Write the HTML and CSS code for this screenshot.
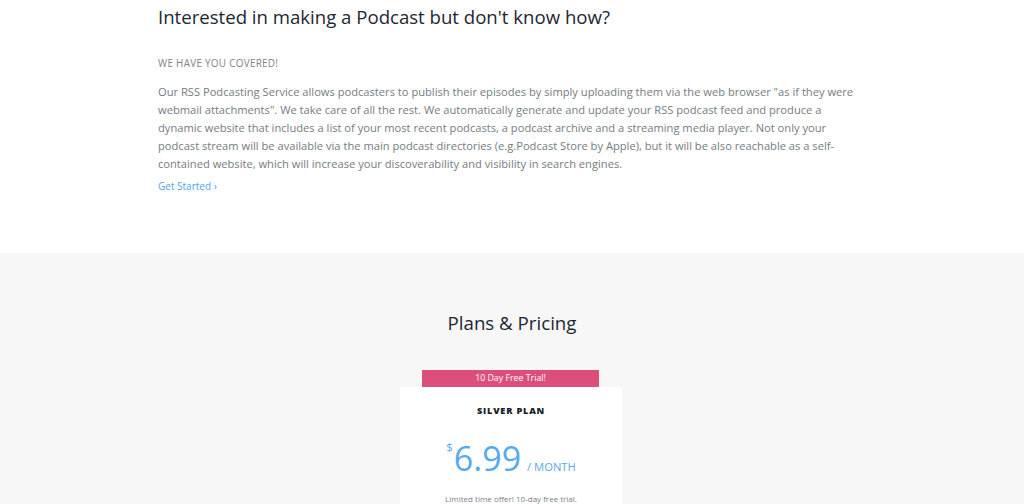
FILE: index.html
```html
<!DOCTYPE html>
<html lang="en">
<head>
<meta charset="utf-8">
<title>RSS Podcasting</title>
<link rel="stylesheet" href="styles.css">
</head>
<body>
<section class="intro">
  <div class="container">
    <h2 class="intro-title">Interested in making a Podcast but don't know how?</h2>
    <p class="eyebrow">WE HAVE YOU COVERED!</p>
    <p class="lead">Our RSS Podcasting Service allows podcasters to publish their episodes by simply uploading them via the web browser "as if they were webmail attachments". We take care of all the rest. We automatically generate and update your RSS podcast feed and produce a dynamic website that includes a list of your most recent podcasts, a podcast archive and a streaming media player. Not only your podcast stream will be available via the main podcast directories (e.g.Podcast Store by Apple), but it will be also reachable as a self-contained website, which will increase your discoverability and visibility in search engines.</p>
    <a class="link" href="#">Get Started <span class="chev">›</span></a>
  </div>
</section>
<section class="pricing">
  <h2 class="pricing-title">Plans &amp; Pricing</h2>
  <div class="plan">
    <div class="ribbon">10 Day Free Trial!</div>
    <div class="card">
      <h3 class="plan-name">SILVER PLAN</h3>
      <div class="price"><span class="cur">$</span><span class="amount">6.99</span><span class="per">/ MONTH</span></div>
      <p class="note">Limited time offer! 10-day free trial.</p>
    </div>
  </div>
</section>
</body>
</html>
```
FILE: styles.css
```css
* { box-sizing: border-box; }
html, body { margin: 0; padding: 0; }
body {
  font-family: "Open Sans", "Liberation Sans", sans-serif;
  background: #ffffff;
  color: #1f2a36;
}
.intro { background: #ffffff; height: 253px; }
.container { width: 708px; margin: 0 auto; padding-top: 3px; }
.intro-title {
  font-size: 18.6px;
  font-weight: 400;
  line-height: 28px;
  margin: 0;
  color: #1d2733;
}
.eyebrow {
  font-size: 9.9px;
  letter-spacing: 0.3px;
  color: #7d8388;
  margin: 25px 0 0;
  line-height: 14px;
}
.lead {
  font-size: 11.15px;
  line-height: 18px;
  color: #767c82;
  margin: 13px 0 0;
}
.link {
  display: inline-block;
  margin-top: 6px;
  font-size: 10px;
  line-height: 14px;
  color: #4fa3e8;
  text-decoration: none;
}
.chev { font-size: 10.5px; }
.pricing {
  background: #f7f7f7;
  height: 251px;
  display: flex;
  flex-direction: column;
  align-items: center;
  padding-top: 57px;
}
.pricing-title {
  font-size: 18.7px;
  font-weight: 400;
  line-height: 26px;
  margin: 0;
  color: #1d2733;
}
.plan {
  margin-top: 34px;
  margin-right: 2px;
  width: 222px;
  display: flex;
  flex-direction: column;
  align-items: center;
}
.ribbon {
  width: 177px;
  height: 17px;
  background: #dc4f7b;
  color: #ffffff;
  font-size: 8.8px;
  line-height: 17px;
  text-align: center;
  margin-right: 1px;
}
.card {
  width: 222px;
  background: #ffffff;
  padding-top: 17px;
  display: flex;
  flex-direction: column;
  align-items: center;
  height: 130px;
}
.plan-name {
  margin: 0;
  font-size: 9.2px;
  font-weight: 800;
  letter-spacing: 0.8px;
  line-height: 14px;
  color: #17202b;
}
.price {
  margin-top: 18px;
  display: flex;
  align-items: baseline;
  color: #56aaee;
}
.cur { font-size: 11.5px; align-self: flex-start; margin-top: 3px; margin-right: 1px; }
.amount { font-size: 34px; line-height: 44px; font-weight: 400; }
.per { font-size: 11.2px; margin-left: 6px; }
.note {
  margin: 13px 0 0;
  font-size: 8px;
  color: #7a8086;
  line-height: 12px;
}
```
